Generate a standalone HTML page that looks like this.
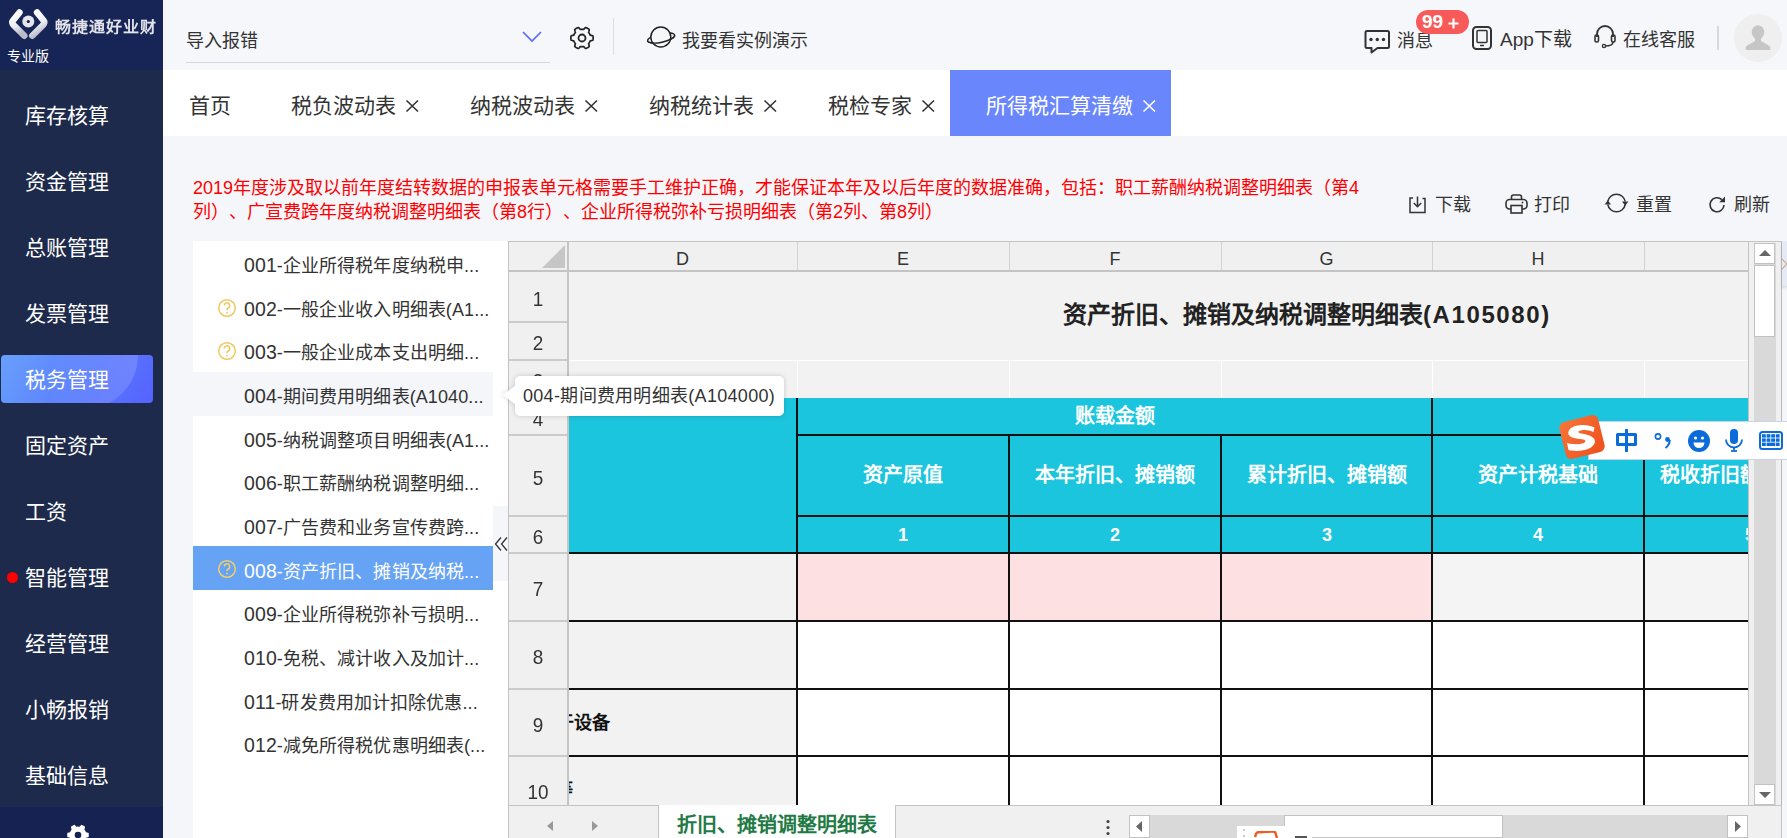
<!DOCTYPE html>
<html lang="zh-CN">
<head>
<meta charset="utf-8">
<style>
*{box-sizing:border-box;margin:0;padding:0}
html,body{text-spacing-trim:space-all;width:1787px;height:838px;overflow:hidden;background:#f5f6fa;font-family:"Liberation Sans",sans-serif;color:#333}
.abs{position:absolute}
.t{position:absolute;white-space:nowrap;line-height:1}
/* sidebar */
#side{position:absolute;left:0;top:0;width:163px;height:838px;background:#1e2a4b}
#logo{position:absolute;left:0;top:0;width:163px;height:70px;background:#172456}
#sbot{position:absolute;left:0;top:807px;width:163px;height:31px;background:#162252}
.mi{position:absolute;left:25px;font-size:21px;color:#fff;line-height:1;white-space:nowrap}
#act{position:absolute;left:1px;top:355px;width:152px;height:48px;border-radius:4px;background:linear-gradient(120deg,#68a0fb 0%,#5c80fd 50%,#5462ff 100%);overflow:hidden}
/* header */
#hdr{position:absolute;left:163px;top:0;width:1624px;height:70px;background:#f6f7fb}
#tabs{position:absolute;left:163px;top:70px;width:1624px;height:66px;background:#fff}
.li{position:absolute;left:244px;margin-top:1px;letter-spacing:0.1px;font-size:18px;color:#333;line-height:1;white-space:nowrap}
.tab{position:absolute;top:95px;font-size:21px;color:#333;line-height:1;white-space:nowrap}
</style>
</head>
<body>
<div id="side">
  <div id="logo"></div>
  <div id="act"><div class="abs" style="left:29px;top:-54px;width:108px;height:108px;border-radius:50%;background:linear-gradient(100deg,rgba(255,255,255,0) 25%,rgba(255,255,255,0.16) 100%)"></div></div>
  <div class="mi" style="top:105px">库存核算</div>
  <div class="mi" style="top:171px">资金管理</div>
  <div class="mi" style="top:237px">总账管理</div>
  <div class="mi" style="top:303px">发票管理</div>
  <div class="mi" style="top:369px">税务管理</div>
  <div class="mi" style="top:435px">固定资产</div>
  <div class="mi" style="top:501px">工资</div>
  <div class="mi" style="top:567px">智能管理</div>
  <div class="mi" style="top:633px">经营管理</div>
  <div class="mi" style="top:699px">小畅报销</div>
  <div class="mi" style="top:765px">基础信息</div>
  <div id="sbot"></div>
</div>
<div id="hdr"></div>
<div id="tabs"></div>
<div class="tab" style="left:189px">首页</div>
<div class="tab" style="left:291px">税负波动表</div>
<div class="tab" style="left:470px">纳税波动表</div>
<div class="tab" style="left:649px">纳税统计表</div>
<div class="tab" style="left:828px">税检专家</div>
<div class="abs" style="left:950px;top:70px;width:221px;height:66px;background:#6a86fc"></div>
<div class="tab" style="left:986px;color:#fff">所得税汇算清缴</div>

<!-- logo -->
<svg class="abs" style="left:0px;top:0px" width="56" height="44" viewBox="0 0 56 44">
  <defs><linearGradient id="lg" x1="0" y1="0" x2="0.3" y2="1"><stop offset="0" stop-color="#ffffff"/><stop offset="0.6" stop-color="#eceef3"/><stop offset="1" stop-color="#b9bcc8"/></linearGradient></defs>
  <path d="M19.5 12.5 L13 20.5 Q11.5 22.5 13.5 25 L24.3 35.8" fill="none" stroke="url(#lg)" stroke-width="6.5" stroke-linecap="round" stroke-linejoin="round"/>
  <path d="M37.1 12.5 L43.6 20.5 Q45.1 22.5 43.1 25 L32.3 35.8" fill="none" stroke="url(#lg)" stroke-width="6.5" stroke-linecap="round" stroke-linejoin="round"/>
  <circle cx="28.3" cy="21.5" r="6" fill="#e4e6ec"/>
  <circle cx="28.3" cy="21.5" r="1.6" fill="#172456"/>
</svg>
<div class="t" style="left:55px;top:19px;font-size:16px;font-weight:bold;color:#e2e3e8;letter-spacing:1px;transform:scaleY(0.95)">畅捷通好业财</div>
<div class="t" style="left:7px;top:49px;font-size:14px;color:#fff">专业版</div>
<!-- header -->
<div class="t" style="left:186px;top:32px;font-size:18px;color:#333">导入报错</div>
<div class="abs" style="left:186px;top:62px;width:364px;height:1px;background:#d6d8de"></div>
<svg class="abs" style="left:521px;top:29px" width="22" height="15" viewBox="0 0 22 15"><polyline points="2,3 11,12 20,3" fill="none" stroke="#5c6bff" stroke-width="1.7"/></svg>
<svg class="abs" style="left:569.5px;top:26px" width="24" height="24" viewBox="0 0 24 24"><path fill="none" stroke="#222" stroke-width="1.7" stroke-linejoin="round" d="M23.15,12.00 L23.15,12.29 L23.13,12.58 L23.12,12.87 L23.09,13.17 L23.05,13.46 L23.01,13.74 L22.96,14.03 L22.51,14.24 L22.04,14.41 L21.56,14.56 L21.08,14.69 L20.61,14.80 L20.16,14.89 L20.08,15.10 L19.99,15.31 L19.90,15.52 L19.81,15.72 L19.71,15.93 L19.60,16.13 L19.49,16.32 L19.38,16.52 L19.25,16.71 L19.13,16.90 L19.00,17.08 L18.86,17.27 L18.72,17.44 L18.58,17.62 L18.73,18.06 L18.87,18.52 L19.00,19.00 L19.11,19.49 L19.19,19.99 L19.24,20.48 L19.02,20.67 L18.79,20.85 L18.55,21.02 L18.32,21.19 L18.07,21.35 L17.83,21.51 L17.58,21.66 L17.32,21.80 L17.06,21.93 L16.80,22.06 L16.54,22.19 L16.27,22.30 L16.00,22.41 L15.72,22.51 L15.32,22.22 L14.93,21.90 L14.56,21.56 L14.21,21.21 L13.88,20.85 L13.58,20.51 L13.35,20.54 L13.13,20.58 L12.90,20.60 L12.68,20.62 L12.45,20.64 L12.23,20.65 L12.00,20.65 L11.77,20.65 L11.55,20.64 L11.32,20.62 L11.10,20.60 L10.87,20.58 L10.65,20.54 L10.42,20.51 L10.12,20.85 L9.79,21.21 L9.44,21.56 L9.07,21.90 L8.68,22.22 L8.28,22.51 L8.00,22.41 L7.73,22.30 L7.46,22.19 L7.20,22.06 L6.94,21.93 L6.68,21.80 L6.43,21.66 L6.17,21.51 L5.93,21.35 L5.68,21.19 L5.45,21.02 L5.21,20.85 L4.98,20.67 L4.76,20.48 L4.81,19.99 L4.89,19.49 L5.00,19.00 L5.13,18.52 L5.27,18.06 L5.42,17.62 L5.28,17.44 L5.14,17.27 L5.00,17.08 L4.87,16.90 L4.75,16.71 L4.62,16.52 L4.51,16.32 L4.40,16.13 L4.29,15.93 L4.19,15.72 L4.10,15.52 L4.01,15.31 L3.92,15.10 L3.84,14.89 L3.39,14.80 L2.92,14.69 L2.44,14.56 L1.96,14.41 L1.49,14.24 L1.04,14.03 L0.99,13.74 L0.95,13.46 L0.91,13.17 L0.88,12.87 L0.87,12.58 L0.85,12.29 L0.85,12.00 L0.85,11.71 L0.87,11.42 L0.88,11.13 L0.91,10.83 L0.95,10.54 L0.99,10.26 L1.04,9.97 L1.49,9.76 L1.96,9.59 L2.44,9.44 L2.92,9.31 L3.39,9.20 L3.84,9.11 L3.92,8.90 L4.01,8.69 L4.10,8.48 L4.19,8.28 L4.29,8.07 L4.40,7.87 L4.51,7.68 L4.62,7.48 L4.75,7.29 L4.87,7.10 L5.00,6.92 L5.14,6.73 L5.28,6.56 L5.42,6.38 L5.27,5.94 L5.13,5.48 L5.00,5.00 L4.89,4.51 L4.81,4.01 L4.76,3.52 L4.98,3.33 L5.21,3.15 L5.45,2.98 L5.68,2.81 L5.93,2.65 L6.17,2.49 L6.42,2.34 L6.68,2.20 L6.94,2.07 L7.20,1.94 L7.46,1.81 L7.73,1.70 L8.00,1.59 L8.28,1.49 L8.68,1.78 L9.07,2.10 L9.44,2.44 L9.79,2.79 L10.12,3.15 L10.42,3.49 L10.65,3.46 L10.87,3.42 L11.10,3.40 L11.32,3.38 L11.55,3.36 L11.77,3.35 L12.00,3.35 L12.23,3.35 L12.45,3.36 L12.68,3.38 L12.90,3.40 L13.13,3.42 L13.35,3.46 L13.58,3.49 L13.88,3.15 L14.21,2.79 L14.56,2.44 L14.93,2.10 L15.32,1.78 L15.72,1.49 L16.00,1.59 L16.27,1.70 L16.54,1.81 L16.80,1.94 L17.06,2.07 L17.32,2.20 L17.58,2.34 L17.83,2.49 L18.07,2.65 L18.32,2.81 L18.55,2.98 L18.79,3.15 L19.02,3.33 L19.24,3.52 L19.19,4.01 L19.11,4.51 L19.00,5.00 L18.87,5.48 L18.73,5.94 L18.58,6.38 L18.72,6.56 L18.86,6.73 L19.00,6.92 L19.13,7.10 L19.25,7.29 L19.38,7.48 L19.49,7.68 L19.60,7.87 L19.71,8.07 L19.81,8.28 L19.90,8.48 L19.99,8.69 L20.08,8.90 L20.16,9.11 L20.61,9.20 L21.08,9.31 L21.56,9.44 L22.04,9.59 L22.51,9.76 L22.96,9.97 L23.01,10.26 L23.05,10.54 L23.09,10.83 L23.12,11.13 L23.13,11.42 L23.15,11.71Z"/><circle cx="12" cy="12" r="3.5" fill="none" stroke="#222" stroke-width="1.8"/></svg>
<div class="abs" style="left:613px;top:18px;width:1px;height:37px;background:#dcdde2"></div>
<svg class="abs" style="left:645px;top:25px" width="32" height="25" viewBox="0 0 32 25"><g transform="rotate(-12 16 12.5)"><ellipse cx="16" cy="13" rx="13.8" ry="4.3" fill="none" stroke="#222" stroke-width="1.4"/></g><circle cx="15.8" cy="12" r="10" fill="#f6f7fb" stroke="#222" stroke-width="1.5"/><g transform="rotate(-12 16 12.5)"><path d="M2.2 13 A13.8 4.3 0 0 0 29.8 13" fill="none" stroke="#222" stroke-width="1.4"/></g></svg>
<div class="t" style="left:682px;top:32px;font-size:18px;color:#333">我要看实例演示</div>
<!-- right header -->
<svg class="abs" style="left:1363px;top:28px" width="28" height="27" viewBox="0 0 28 27"><path d="M4 3h20.5a1.5 1.5 0 0 1 1.5 1.5v14a1.5 1.5 0 0 1 -1.5 1.5h-10l-6 4.5v-4.5h-4.5a1.5 1.5 0 0 1 -1.5 -1.5v-14a1.5 1.5 0 0 1 1.5 -1.5z" fill="none" stroke="#333" stroke-width="2" stroke-linejoin="round"/><circle cx="8" cy="11.5" r="1.7" fill="#333"/><circle cx="14.3" cy="11.5" r="1.7" fill="#333"/><circle cx="20.5" cy="11.5" r="1.7" fill="#333"/></svg>
<div class="t" style="left:1397px;top:32px;font-size:18px;color:#333">消息</div>
<div class="abs" style="left:1416px;top:10px;width:53px;height:24px;border-radius:12px;background:#f85a5a"></div>
<div class="t" style="left:1422px;top:12px;font-size:19px;font-weight:bold;color:#fff">99</div>
<svg class="abs" style="left:1448px;top:18px" width="11" height="11"><path d="M5.5 0.5V10.5M0.5 5.5H10.5" stroke="#fff" stroke-width="2.2"/></svg>
<svg class="abs" style="left:1471px;top:25px" width="22" height="26" viewBox="0 0 22 26"><rect x="2" y="2" width="18" height="22" rx="3.5" fill="none" stroke="#333" stroke-width="2"/><rect x="6" y="5.5" width="10" height="12" rx="1" fill="none" stroke="#333" stroke-width="1.5"/><line x1="9" y1="20.5" x2="13" y2="20.5" stroke="#333" stroke-width="1.5"/></svg>
<div class="t" style="left:1500px;top:30px;font-size:19px;color:#333">App下载</div>
<svg class="abs" style="left:1593px;top:24px" width="24" height="25" viewBox="0 0 24 25"><path d="M4 13 V10 A8 8 0 0 1 20 10 V13" fill="none" stroke="#333" stroke-width="1.8"/><rect x="2" y="11" width="3.5" height="7" rx="1.5" fill="none" stroke="#333" stroke-width="1.6"/><rect x="18.5" y="11" width="3.5" height="7" rx="1.5" fill="none" stroke="#333" stroke-width="1.6"/><path d="M20 18 C20 21 17 22 12 22" fill="none" stroke="#333" stroke-width="1.6"/><circle cx="11" cy="22" r="1.6" fill="none" stroke="#333" stroke-width="1.4"/></svg>
<div class="t" style="left:1623px;top:31px;font-size:18px;color:#333">在线客服</div>
<div class="abs" style="left:1717px;top:26px;width:2px;height:24px;background:#d9d9d9"></div>
<div class="abs" style="left:1734px;top:14px;width:48px;height:48px;border-radius:50%;background:#efefef;overflow:hidden">
  <svg width="48" height="48" viewBox="0 0 48 48"><ellipse cx="24" cy="18.3" rx="6.2" ry="7" fill="#c6c6c6"/><path d="M11.7 36 L11.7 33.5 Q12 32 14 31 L21 27 L21 24 H27 V27 L34 31 Q36 32 36.3 33.5 L36.3 36 Z" fill="#c6c6c6"/></svg>
</div>

<!-- notice -->
<div class="t" style="left:193px;top:179px;font-size:18px;color:#f00">2019年度涉及取以前年度结转数据的申报表单元格需要手工维护正确，才能保证本年及以后年度的数据准确，包括：职工薪酬纳税调整明细表（第4</div>
<div class="t" style="left:193px;top:203px;font-size:18px;color:#f00">列）、广宣费跨年度纳税调整明细表（第8行）、企业所得税弥补亏损明细表（第2列、第8列）</div>
<!-- toolbar -->
<svg class="abs" style="left:1408px;top:195px" width="19" height="19" viewBox="0 0 19 19"><path d="M5 3H2v14.5h15V3.5h-2.5" fill="none" stroke="#333" stroke-width="1.5"/><path d="M9.5 1.5v10M5.8 8l3.7 3.7 3.7-3.7" fill="none" stroke="#333" stroke-width="1.5"/></svg>
<div class="t" style="left:1435px;top:196px;font-size:18px;color:#333">下载</div>
<svg class="abs" style="left:1505px;top:194px" width="23" height="20" viewBox="0 0 23 20"><path d="M6.5 5.5V3a2 2 0 0 1 2-2h6a2 2 0 0 1 2 2v2.5" fill="none" stroke="#333" stroke-width="1.6"/><path d="M6 15H4.5A3.5 3.5 0 0 1 1 11.5V9A3.5 3.5 0 0 1 4.5 5.5h14A3.5 3.5 0 0 1 22 9v2.5a3.5 3.5 0 0 1-3.5 3.5H17" fill="none" stroke="#333" stroke-width="1.6"/><rect x="6" y="11.5" width="11" height="7.5" fill="none" stroke="#333" stroke-width="1.6"/><circle cx="17.5" cy="8.5" r="0.9" fill="#333"/></svg>
<div class="t" style="left:1534px;top:196px;font-size:18px;color:#333">打印</div>
<svg class="abs" style="left:1604px;top:193px" width="25" height="21" viewBox="0 0 25 21"><path d="M3.83 8.47A8.8 8.8 0 0 1 21.17 8.47" fill="none" stroke="#333" stroke-width="1.6"/><path d="M21.17 11.53A8.8 8.8 0 0 1 3.83 11.53" fill="none" stroke="#333" stroke-width="1.6"/><path d="M18 8.6h6.4l-3.2 4.2z" fill="#333"/><path d="M7 11.4H0.6l3.2-4.2z" fill="#333"/></svg>
<div class="t" style="left:1636px;top:196px;font-size:18px;color:#333">重置</div>
<svg class="abs" style="left:1708px;top:195px" width="19" height="19" viewBox="0 0 19 19"><path d="M16 10A7 7 0 1 1 13.8 4.6" fill="none" stroke="#333" stroke-width="1.6"/><path d="M17 1.5v5.8h-5.8z" fill="#333"/></svg>
<div class="t" style="left:1734px;top:196px;font-size:18px;color:#333">刷新</div>
<!-- list panel -->
<div class="abs" style="left:193px;top:241px;width:315px;height:597px;background:#fff"></div>
<div class="abs" style="left:193px;top:372px;width:300px;height:44px;background:#f5f6fa"></div>
<div class="abs" style="left:493px;top:506px;width:15px;height:75px;background:#f5f6fa"></div>
<div class="abs" style="left:193px;top:546px;width:300px;height:44px;background:#66a3f4"></div>
<div class="li" style="top:255px"><span style="font-size:19.5px">001</span>-企业所得税年度纳税申...</div>
<div class="li" style="top:299px"><span style="font-size:19.5px">002</span>-一般企业收入明细表(A1...</div>
<div class="li" style="top:342px"><span style="font-size:19.5px">003</span>-一般企业成本支出明细...</div>
<div class="li" style="top:386px"><span style="font-size:19.5px">004</span>-期间费用明细表(A1040...</div>
<div class="li" style="top:430px"><span style="font-size:19.5px">005</span>-纳税调整项目明细表(A1...</div>
<div class="li" style="top:473px"><span style="font-size:19.5px">006</span>-职工薪酬纳税调整明细...</div>
<div class="li" style="top:517px"><span style="font-size:19.5px">007</span>-广告费和业务宣传费跨...</div>
<div class="li" style="top:561px;color:#fff"><span style="font-size:19.5px">008</span>-资产折旧、摊销及纳税...</div>
<div class="li" style="top:604px"><span style="font-size:19.5px">009</span>-企业所得税弥补亏损明...</div>
<div class="li" style="top:648px"><span style="font-size:19.5px">010</span>-免税、减计收入及加计...</div>
<div class="li" style="top:692px"><span style="font-size:19.5px">011</span>-研发费用加计扣除优惠...</div>
<div class="li" style="top:735px"><span style="font-size:19.5px">012</span>-减免所得税优惠明细表(...</div>
<svg class="abs" style="left:217px;top:298px" width="20" height="20" viewBox="0 0 20 20"><circle cx="10" cy="10" r="8.3" fill="none" stroke="#f1c85e" stroke-width="1.5"/><path d="M7.3 7.6a2.7 2.7 0 1 1 3.9 2.4c-.8.4-1.2.9-1.2 1.7v.6" fill="none" stroke="#f1c85e" stroke-width="1.5"/><circle cx="10" cy="14.6" r="0.95" fill="#f1c85e"/></svg>
<svg class="abs" style="left:217px;top:341px" width="20" height="20" viewBox="0 0 20 20"><circle cx="10" cy="10" r="8.3" fill="none" stroke="#f1c85e" stroke-width="1.5"/><path d="M7.3 7.6a2.7 2.7 0 1 1 3.9 2.4c-.8.4-1.2.9-1.2 1.7v.6" fill="none" stroke="#f1c85e" stroke-width="1.5"/><circle cx="10" cy="14.6" r="0.95" fill="#f1c85e"/></svg>
<svg class="abs" style="left:217px;top:559px" width="20" height="20" viewBox="0 0 20 20"><circle cx="10" cy="10" r="8.3" fill="none" stroke="#f3cf6a" stroke-width="1.5"/><path d="M7.3 7.6a2.7 2.7 0 1 1 3.9 2.4c-.8.4-1.2.9-1.2 1.7v.6" fill="none" stroke="#f3cf6a" stroke-width="1.5"/><circle cx="10" cy="14.6" r="0.95" fill="#f3cf6a"/></svg>
<svg class="abs" style="left:494px;top:536px" width="14" height="16" viewBox="0 0 14 16"><path d="M7 1.5L1.5 8L7 14.5M13 1.5L7.5 8L13 14.5" fill="none" stroke="#333" stroke-width="1.3"/></svg>
<!-- sheet -->
<div class="abs" style="left:508px;top:241px;width:1274px;height:597px;background:#f0f0f0;border:1px solid #c3c3c3;border-bottom:none"></div>
<div class="abs" style="left:568px;top:271px;width:1180px;height:534px;background:#f2f2f2;overflow:hidden" id="cells">
<div class="abs" style="left:0px;top:89px;width:1180px;height:1px;background:#fff"></div>
<div class="abs" style="left:229px;top:89px;width:1px;height:38px;background:#fff"></div>
<div class="abs" style="left:441px;top:89px;width:1px;height:38px;background:#fff"></div>
<div class="abs" style="left:653px;top:89px;width:1px;height:38px;background:#fff"></div>
<div class="abs" style="left:864px;top:89px;width:1px;height:38px;background:#fff"></div>
<div class="abs" style="left:1076px;top:89px;width:1px;height:38px;background:#fff"></div>
<div class="abs" style="left:0px;top:127px;width:1180px;height:155px;background:#1bc5de"></div>
<div class="abs" style="left:229px;top:282px;width:635px;height:68px;background:#fde0e2"></div>
<div class="abs" style="left:864px;top:282px;width:316px;height:68px;background:#f4f4f4"></div>
<div class="abs" style="left:229px;top:350px;width:951px;height:184px;background:#fff"></div>
<div class="abs" style="left:0px;top:281px;width:1180px;height:2px;background:#111"></div>
<div class="abs" style="left:0px;top:349px;width:1180px;height:2px;background:#111"></div>
<div class="abs" style="left:0px;top:417px;width:1180px;height:2px;background:#111"></div>
<div class="abs" style="left:0px;top:484px;width:1180px;height:2px;background:#111"></div>
<div class="abs" style="left:229px;top:163px;width:951px;height:2px;background:#111"></div>
<div class="abs" style="left:229px;top:244px;width:951px;height:2px;background:#111"></div>
<div class="abs" style="left:228px;top:127px;width:2px;height:407px;background:#111"></div>
<div class="abs" style="left:863px;top:127px;width:2px;height:407px;background:#111"></div>
<div class="abs" style="left:440px;top:164px;width:2px;height:370px;background:#111"></div>
<div class="abs" style="left:652px;top:164px;width:2px;height:370px;background:#111"></div>
<div class="abs" style="left:1075px;top:164px;width:2px;height:370px;background:#111"></div>
</div>
<div class="abs" style="left:797px;top:242px;width:1px;height:29px;background:#d2d2d2"></div>
<div class="abs" style="left:1009px;top:242px;width:1px;height:29px;background:#d2d2d2"></div>
<div class="abs" style="left:1221px;top:242px;width:1px;height:29px;background:#d2d2d2"></div>
<div class="abs" style="left:1432px;top:242px;width:1px;height:29px;background:#d2d2d2"></div>
<div class="abs" style="left:1644px;top:242px;width:1px;height:29px;background:#d2d2d2"></div>
<div class="abs" style="left:509px;top:270px;width:1239px;height:2px;background:#c4c4c4"></div>
<div class="abs" style="left:567px;top:242px;width:2px;height:563px;background:#c4c4c4"></div>
<div class="abs" style="left:509px;top:321px;width:58px;height:2px;background:#cbcbcb"></div>
<div class="abs" style="left:509px;top:359px;width:58px;height:2px;background:#cbcbcb"></div>
<div class="abs" style="left:509px;top:397px;width:58px;height:2px;background:#cbcbcb"></div>
<div class="abs" style="left:509px;top:434px;width:58px;height:2px;background:#cbcbcb"></div>
<div class="abs" style="left:509px;top:515px;width:58px;height:2px;background:#cbcbcb"></div>
<div class="abs" style="left:509px;top:552px;width:58px;height:2px;background:#cbcbcb"></div>
<div class="abs" style="left:509px;top:620px;width:58px;height:2px;background:#cbcbcb"></div>
<div class="abs" style="left:509px;top:688px;width:58px;height:2px;background:#cbcbcb"></div>
<div class="abs" style="left:509px;top:755px;width:58px;height:2px;background:#cbcbcb"></div>
<svg class="abs" style="left:541px;top:244px" width="25" height="25"><path d="M24 1V24H1Z" fill="#c6c6c6"/></svg>
<div class="t" style="left:568px;width:229px;text-align:center;top:250px;font-size:18px;color:#333">D</div>
<div class="t" style="left:797px;width:212px;text-align:center;top:250px;font-size:18px;color:#333">E</div>
<div class="t" style="left:1009px;width:212px;text-align:center;top:250px;font-size:18px;color:#333">F</div>
<div class="t" style="left:1221px;width:211px;text-align:center;top:250px;font-size:18px;color:#333">G</div>
<div class="t" style="left:1432px;width:212px;text-align:center;top:250px;font-size:18px;color:#333">H</div>
<div class="t" style="left:509px;width:58px;text-align:center;top:287.5px;font-size:21px;color:#333;transform:scaleX(0.9)">1</div>
<div class="t" style="left:509px;width:58px;text-align:center;top:332.0px;font-size:21px;color:#333;transform:scaleX(0.9)">2</div>
<div class="t" style="left:509px;width:58px;text-align:center;top:370.0px;font-size:21px;color:#333;transform:scaleX(0.9)">3</div>
<div class="t" style="left:509px;width:58px;text-align:center;top:407.5px;font-size:21px;color:#333;transform:scaleX(0.9)">4</div>
<div class="t" style="left:509px;width:58px;text-align:center;top:466.5px;font-size:21px;color:#333;transform:scaleX(0.9)">5</div>
<div class="t" style="left:509px;width:58px;text-align:center;top:525.5px;font-size:21px;color:#333;transform:scaleX(0.9)">6</div>
<div class="t" style="left:509px;width:58px;text-align:center;top:578.0px;font-size:21px;color:#333;transform:scaleX(0.9)">7</div>
<div class="t" style="left:509px;width:58px;text-align:center;top:646.0px;font-size:21px;color:#333;transform:scaleX(0.9)">8</div>
<div class="t" style="left:509px;width:58px;text-align:center;top:713.5px;font-size:21px;color:#333;transform:scaleX(0.9)">9</div>
<div class="t" style="left:509px;width:58px;text-align:center;top:781.0px;font-size:21px;color:#333;transform:scaleX(0.9)">10</div>
<div class="t" style="left:1063px;top:303px;font-size:24px;font-weight:bold;color:#222">资产折旧、摊销及纳税调整明细表<span style="letter-spacing:1.6px">(A105080)</span></div>
<div class="t" style="left:797px;width:635px;text-align:center;top:406px;font-size:20px;font-weight:bold;color:#fff">账载金额</div>
<div class="t" style="left:797px;width:212px;text-align:center;top:465px;font-size:20px;font-weight:bold;color:#fff">资产原值</div>
<div class="t" style="left:1009px;width:212px;text-align:center;top:465px;font-size:20px;font-weight:bold;color:#fff">本年折旧、摊销额</div>
<div class="t" style="left:1221px;width:212px;text-align:center;top:465px;font-size:20px;font-weight:bold;color:#fff">累计折旧、摊销额</div>
<div class="t" style="left:1432px;width:212px;text-align:center;top:465px;font-size:20px;font-weight:bold;color:#fff">资产计税基础</div>
<div class="abs" style="left:1645px;top:440px;width:103px;height:70px;overflow:hidden"><div class="t" style="left:15px;top:25px;font-size:20px;font-weight:bold;color:#fff">税收折旧额</div></div>
<div class="t" style="left:797px;width:212px;text-align:center;top:526px;font-size:18px;font-weight:bold;color:#fff">1</div>
<div class="t" style="left:1009px;width:212px;text-align:center;top:526px;font-size:18px;font-weight:bold;color:#fff">2</div>
<div class="t" style="left:1221px;width:212px;text-align:center;top:526px;font-size:18px;font-weight:bold;color:#fff">3</div>
<div class="t" style="left:1432px;width:212px;text-align:center;top:526px;font-size:18px;font-weight:bold;color:#fff">4</div>
<div class="t" style="left:1644px;width:212px;text-align:center;top:526px;font-size:18px;font-weight:bold;color:#fff">5</div>
<div class="abs" style="left:1748px;top:242px;width:34px;height:563px;background:#f0f0f0;border-left:1px solid #c4c4c4;border-right:1px solid #b8b8b8"></div>
<div class="abs" style="left:569px;top:700px;width:228px;height:50px;overflow:hidden"><div class="t" style="left:-13px;top:14px;font-size:18px;font-weight:bold;color:#111">于设备</div></div>
<div class="abs" style="left:569px;top:770px;width:228px;height:35px;overflow:hidden"><div class="t" style="left:-14px;top:11px;font-size:18px;font-weight:bold;color:#111">等</div></div>
<div class="abs" style="left:1754px;top:243px;width:22px;height:562px;background:#d9d9d9"></div>
<div class="abs" style="left:1754px;top:243px;width:21px;height:21px;background:#fff;border:1px solid #c2c2c2"></div>
<svg class="abs" style="left:1758px;top:249px" width="14" height="8"><path d="M7 1L13 7H1Z" fill="#666"/></svg>
<div class="abs" style="left:1754px;top:265px;width:21px;height:72px;background:#fff;border:1px solid #c2c2c2"></div>
<div class="abs" style="left:1754px;top:784px;width:21px;height:21px;background:#fff;border:1px solid #c2c2c2"></div>
<svg class="abs" style="left:1758px;top:791px" width="14" height="8"><path d="M1 1H13L7 7Z" fill="#666"/></svg>
<div class="abs" style="left:508px;top:805px;width:1274px;height:33px;background:#f0f0f0;border-top:1px solid #c4c4c4;border-left:1px solid #c4c4c4;border-right:1px solid #c4c4c4"></div>
<div class="abs" style="left:658px;top:805px;width:238px;height:33px;background:#fff;border-left:1px solid #c4c4c4;border-right:1px solid #c4c4c4"></div>
<div class="t" style="left:677px;top:815px;font-size:20px;font-weight:bold;color:#1f7a45">折旧、摊销调整明细表</div>
<svg class="abs" style="left:546px;top:820px" width="8" height="12"><path d="M7 1V11L1 6Z" fill="#999"/></svg>
<svg class="abs" style="left:591px;top:820px" width="8" height="12"><path d="M1 1V11L7 6Z" fill="#999"/></svg>
<svg class="abs" style="left:1105px;top:819px" width="6" height="17"><circle cx="3" cy="2.5" r="1.6" fill="#444"/><circle cx="3" cy="8.5" r="1.6" fill="#444"/><circle cx="3" cy="14.5" r="1.6" fill="#444"/></svg>
<div class="abs" style="left:1129px;top:815px;width:619px;height:23px;background:#d9d9d9"></div>
<div class="abs" style="left:1129px;top:815px;width:21px;height:23px;background:#fff;border:1px solid #c2c2c2"></div>
<svg class="abs" style="left:1135px;top:820px" width="8" height="13"><path d="M7 1V12L1 6.5Z" fill="#666"/></svg>
<div class="abs" style="left:1284px;top:815px;width:219px;height:23px;background:#fff;border:1px solid #c2c2c2"></div>
<div class="abs" style="left:1727px;top:815px;width:21px;height:23px;background:#fff;border:1px solid #c2c2c2"></div>
<svg class="abs" style="left:1734px;top:820px" width="8" height="13"><path d="M1 1V12L7 6.5Z" fill="#666"/></svg>
<svg class="abs" style="left:490px;top:366px;filter:drop-shadow(0 0 2.5px rgba(0,0,0,0.18))" width="305" height="60" viewBox="0 0 305 60"><path d="M30 10 H289 A5 5 0 0 1 294 15 V45 A5 5 0 0 1 289 50 H30 A5 5 0 0 1 25 45 V38 L12.5 29 L25 20 V15 A5 5 0 0 1 30 10 Z" fill="#fff"/></svg>

<div class="t" style="left:523px;top:387px;font-size:18px;color:#333;letter-spacing:0.3px">004-期间费用明细表(A104000)</div>

<!-- red dot -->
<div class="abs" style="left:7px;top:572px;width:11px;height:11px;border-radius:50%;background:#f00"></div>
<!-- sidebar gear -->
<svg class="abs" style="left:65.5px;top:822.5px" width="24" height="24" viewBox="0 0 24 24"><path fill="#fff" d="M22.80,12.00 L22.80,12.28 L22.79,12.57 L22.77,12.85 L22.74,13.13 L22.71,13.41 L22.67,13.69 L22.62,13.97 L22.30,14.19 L21.79,14.35 L21.27,14.48 L20.75,14.59 L20.25,14.68 L19.92,14.80 L19.84,15.01 L19.76,15.21 L19.67,15.42 L19.58,15.62 L19.48,15.81 L19.38,16.01 L19.27,16.20 L19.16,16.39 L19.04,16.57 L18.92,16.76 L18.80,16.94 L18.66,17.11 L18.53,17.29 L18.39,17.46 L18.45,17.80 L18.62,18.29 L18.79,18.79 L18.93,19.30 L19.04,19.82 L19.01,20.21 L18.80,20.39 L18.57,20.57 L18.35,20.74 L18.12,20.90 L17.88,21.06 L17.64,21.21 L17.40,21.35 L17.15,21.49 L16.90,21.62 L16.65,21.75 L16.39,21.87 L16.13,21.98 L15.87,22.08 L15.61,22.18 L15.25,22.01 L14.86,21.65 L14.48,21.27 L14.13,20.88 L13.80,20.48 L13.53,20.26 L13.31,20.30 L13.10,20.33 L12.88,20.35 L12.66,20.37 L12.44,20.39 L12.22,20.40 L12.00,20.40 L11.78,20.40 L11.56,20.39 L11.34,20.37 L11.12,20.35 L10.90,20.33 L10.69,20.30 L10.47,20.26 L10.20,20.48 L9.87,20.88 L9.52,21.27 L9.14,21.65 L8.75,22.01 L8.39,22.18 L8.13,22.08 L7.87,21.98 L7.61,21.87 L7.35,21.75 L7.10,21.62 L6.85,21.49 L6.60,21.35 L6.36,21.21 L6.12,21.06 L5.88,20.90 L5.65,20.74 L5.43,20.57 L5.20,20.39 L4.99,20.21 L4.96,19.82 L5.07,19.30 L5.21,18.79 L5.38,18.29 L5.55,17.80 L5.61,17.46 L5.47,17.29 L5.34,17.11 L5.20,16.94 L5.08,16.76 L4.96,16.57 L4.84,16.39 L4.73,16.20 L4.62,16.01 L4.52,15.81 L4.42,15.62 L4.33,15.42 L4.24,15.21 L4.16,15.01 L4.08,14.80 L3.75,14.68 L3.25,14.59 L2.73,14.48 L2.21,14.35 L1.70,14.19 L1.38,13.97 L1.33,13.69 L1.29,13.41 L1.26,13.13 L1.23,12.85 L1.21,12.57 L1.20,12.28 L1.20,12.00 L1.20,11.72 L1.21,11.43 L1.23,11.15 L1.26,10.87 L1.29,10.59 L1.33,10.31 L1.38,10.03 L1.70,9.81 L2.21,9.65 L2.73,9.52 L3.25,9.41 L3.75,9.32 L4.08,9.20 L4.16,8.99 L4.24,8.79 L4.33,8.58 L4.42,8.38 L4.52,8.19 L4.62,7.99 L4.73,7.80 L4.84,7.61 L4.96,7.43 L5.08,7.24 L5.20,7.06 L5.34,6.89 L5.47,6.71 L5.61,6.54 L5.55,6.20 L5.38,5.71 L5.21,5.21 L5.07,4.70 L4.96,4.18 L4.99,3.79 L5.20,3.61 L5.43,3.43 L5.65,3.26 L5.88,3.10 L6.12,2.94 L6.36,2.79 L6.60,2.65 L6.85,2.51 L7.10,2.38 L7.35,2.25 L7.61,2.13 L7.87,2.02 L8.13,1.92 L8.39,1.82 L8.75,1.99 L9.14,2.35 L9.52,2.73 L9.87,3.12 L10.20,3.52 L10.47,3.74 L10.69,3.70 L10.90,3.67 L11.12,3.65 L11.34,3.63 L11.56,3.61 L11.78,3.60 L12.00,3.60 L12.22,3.60 L12.44,3.61 L12.66,3.63 L12.88,3.65 L13.10,3.67 L13.31,3.70 L13.53,3.74 L13.80,3.52 L14.13,3.12 L14.48,2.73 L14.86,2.35 L15.25,1.99 L15.61,1.82 L15.87,1.92 L16.13,2.02 L16.39,2.13 L16.65,2.25 L16.90,2.38 L17.15,2.51 L17.40,2.65 L17.64,2.79 L17.88,2.94 L18.12,3.10 L18.35,3.26 L18.57,3.43 L18.80,3.61 L19.01,3.79 L19.04,4.18 L18.93,4.70 L18.79,5.21 L18.62,5.71 L18.45,6.20 L18.39,6.54 L18.53,6.71 L18.66,6.89 L18.80,7.06 L18.92,7.24 L19.04,7.43 L19.16,7.61 L19.27,7.80 L19.38,7.99 L19.48,8.19 L19.58,8.38 L19.67,8.58 L19.76,8.79 L19.84,8.99 L19.92,9.20 L20.25,9.32 L20.75,9.41 L21.27,9.52 L21.79,9.65 L22.30,9.81 L22.62,10.03 L22.67,10.31 L22.71,10.59 L22.74,10.87 L22.77,11.15 L22.79,11.43 L22.80,11.72Z"/><circle cx="12" cy="12" r="3.3" fill="#162252"/></svg>
<!-- IME bar -->
<div class="abs" style="left:1588px;top:421px;width:199px;height:39px;background:#fff;border:1px solid #c9d3ea;border-right:none"></div>
<svg class="abs" style="left:1556px;top:413px" width="52" height="48" viewBox="0 0 52 48">
  <defs><linearGradient id="og" x1="0" y1="0" x2="1" y2="1"><stop offset="0" stop-color="#f7763a"/><stop offset="1" stop-color="#ee4f1c"/></linearGradient></defs>
  <g transform="rotate(-14 26 24)"><rect x="6" y="5" width="40" height="38" rx="6" fill="url(#og)"/></g>
  <path d="M38.5 14.5 C31 10.5 15 11 12.5 18.5 C10.5 25 21 25.5 27 26.5 C30.5 27 30 29.5 26.5 30.5 C22 31.5 16 31.5 11 30 L12.5 37 C20 39 35 38 38.5 30.5 C41 24.5 33 21.5 25.5 20.5 C21.5 20 21.5 18 25 17.5 C29.5 16.5 34 17.5 37.5 19 Z" fill="#fff"/>
</svg>
<svg class="abs" style="left:1615px;top:429px" width="24" height="23" viewBox="0 0 24 23"><rect x="2.5" y="5.5" width="18" height="10" fill="none" stroke="#0b6cd9" stroke-width="3" stroke-linejoin="round"/><line x1="11.5" y1="1" x2="11.5" y2="22" stroke="#0b6cd9" stroke-width="3" stroke-linecap="round"/></svg>
<svg class="abs" style="left:1653px;top:432px" width="22" height="18" viewBox="0 0 22 18"><circle cx="5" cy="4.5" r="2.6" fill="none" stroke="#0b6cd9" stroke-width="1.6"/><circle cx="14.5" cy="7.5" r="2.4" fill="#0b6cd9"/><path d="M16.8 8 Q16.5 13 12.5 16" fill="none" stroke="#0b6cd9" stroke-width="2"/></svg>
<svg class="abs" style="left:1687px;top:429px" width="24" height="24" viewBox="0 0 24 24"><circle cx="12" cy="12" r="11" fill="#0b6cd9"/><circle cx="8.5" cy="9" r="1.6" fill="#fff"/><circle cx="15.5" cy="9" r="1.6" fill="#fff"/><path d="M6.5 13.5 H17.5 A5.5 5.5 0 0 1 6.5 13.5Z" fill="#fff"/></svg>
<svg class="abs" style="left:1724px;top:428px" width="20" height="25" viewBox="0 0 20 25"><rect x="6" y="1" width="8" height="15" rx="4" fill="#0b6cd9"/><path d="M2 11.5 A8 8 0 0 0 18 11.5" fill="none" stroke="#0b6cd9" stroke-width="1.8"/><line x1="10" y1="19.5" x2="10" y2="22" stroke="#0b6cd9" stroke-width="1.8"/><line x1="7" y1="23" x2="13" y2="23" stroke="#0b6cd9" stroke-width="1.8"/></svg>
<svg class="abs" style="left:1759px;top:431px" width="24" height="19" viewBox="0 0 24 19"><rect x="1" y="1" width="22" height="17" rx="2.5" fill="#fff" stroke="#0b6cd9" stroke-width="2"/><g fill="#0b6cd9"><rect x="3.0" y="3.2" width="3.8" height="3.4"/><rect x="7.6" y="3.2" width="3.8" height="3.4"/><rect x="12.2" y="3.2" width="3.8" height="3.4"/><rect x="16.8" y="3.2" width="3.8" height="3.4"/><rect x="3.0" y="7.4" width="3.8" height="3.4"/><rect x="7.6" y="7.4" width="3.8" height="3.4"/><rect x="12.2" y="7.4" width="3.8" height="3.4"/><rect x="16.8" y="7.4" width="3.8" height="3.4"/><rect x="3.0" y="11.6" width="3.8" height="3.4"/><rect x="16.8" y="11.6" width="3.8" height="3.4"/><rect x="7.6" y="11.6" width="8.6" height="3.4"/></g></svg>
<!-- right edge floating -->
<div class="abs" style="left:1782px;top:241px;width:5px;height:45px;background:#e6eaf5;box-shadow:0 2px 3px rgba(0,0,0,0.12);overflow:hidden"><svg class="abs" style="left:-4px;top:14px" width="10" height="18"><path d="M1 1L9 9L1 17" fill="none" stroke="#c9a98a" stroke-width="1.2"/></svg></div>
<!-- bottom sogou mini -->
<div class="abs" style="left:1237px;top:826px;width:75px;height:12px;background:#fff"></div>
<div class="abs" style="left:1243px;top:829px;width:2px;height:2px;background:#ccc"></div>
<div class="abs" style="left:1243px;top:835px;width:2px;height:2px;background:#ccc"></div>
<svg class="abs" style="left:1253px;top:831px" width="26" height="7"><path d="M2 6 L3 3 Q3.5 1.5 5 1.3 L20 0.5 Q22 0.5 22.5 2 L24 7" fill="none" stroke="#f05a1e" stroke-width="2.4"/></svg>
<div class="abs" style="left:1295px;top:836px;width:12px;height:2px;background:#555"></div>
<!-- tab x marks -->
<svg class="abs" style="left:405px;top:99px" width="15" height="14"><path d="M1.5 1.5L13 12.5M13 1.5L1.5 12.5" stroke="#333" stroke-width="1.6"/></svg>
<svg class="abs" style="left:584px;top:99px" width="15" height="14"><path d="M1.5 1.5L13 12.5M13 1.5L1.5 12.5" stroke="#333" stroke-width="1.6"/></svg>
<svg class="abs" style="left:763px;top:99px" width="15" height="14"><path d="M1.5 1.5L13 12.5M13 1.5L1.5 12.5" stroke="#333" stroke-width="1.6"/></svg>
<svg class="abs" style="left:921px;top:99px" width="15" height="14"><path d="M1.5 1.5L13 12.5M13 1.5L1.5 12.5" stroke="#333" stroke-width="1.6"/></svg>
<svg class="abs" style="left:1142px;top:99px" width="15" height="14"><path d="M1.5 1.5L13 12.5M13 1.5L1.5 12.5" stroke="#fff" stroke-width="1.6"/></svg>
</body>
</html>
